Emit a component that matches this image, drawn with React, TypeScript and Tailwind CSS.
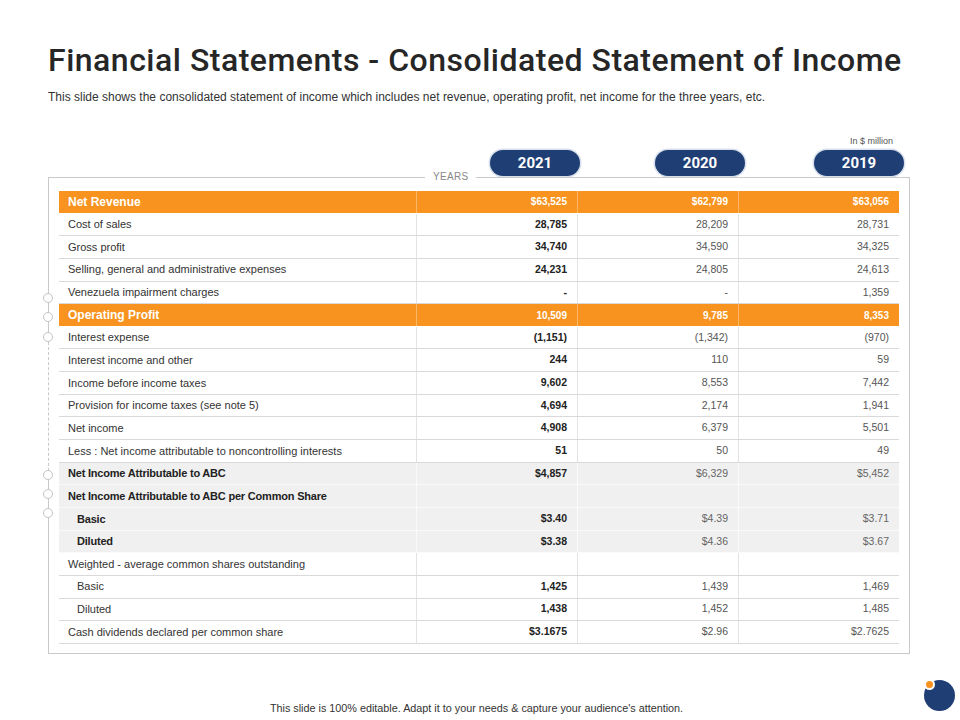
import React from 'react'

type Row = {
  label: string
  values: [string, string, string]
  kind?: 'orange' | 'gray'
  indent?: boolean
  boldLabel?: boolean
}

const rows: Row[] = [
  { label: 'Net Revenue', values: ['$63,525', '$62,799', '$63,056'], kind: 'orange' },
  { label: 'Cost of sales', values: ['28,785', '28,209', '28,731'] },
  { label: 'Gross profit', values: ['34,740', '34,590', '34,325'] },
  { label: 'Selling, general and administrative expenses', values: ['24,231', '24,805', '24,613'] },
  { label: 'Venezuela impairment charges', values: ['-', '-', '1,359'] },
  { label: 'Operating Profit', values: ['10,509', '9,785', '8,353'], kind: 'orange' },
  { label: 'Interest expense', values: ['(1,151)', '(1,342)', '(970)'] },
  { label: 'Interest income and other', values: ['244', '110', '59'] },
  { label: 'Income before income taxes', values: ['9,602', '8,553', '7,442'] },
  { label: 'Provision for income taxes (see note 5)', values: ['4,694', '2,174', '1,941'] },
  { label: 'Net income', values: ['4,908', '6,379', '5,501'] },
  { label: 'Less : Net income attributable to noncontrolling interests', values: ['51', '50', '49'] },
  { label: 'Net Income Attributable to ABC', values: ['$4,857', '$6,329', '$5,452'], kind: 'gray', boldLabel: true },
  { label: 'Net Income Attributable to ABC per Common Share', values: ['', '', ''], kind: 'gray', boldLabel: true },
  { label: 'Basic', values: ['$3.40', '$4.39', '$3.71'], kind: 'gray', boldLabel: true, indent: true },
  { label: 'Diluted', values: ['$3.38', '$4.36', '$3.67'], kind: 'gray', boldLabel: true, indent: true },
  { label: 'Weighted - average common shares outstanding', values: ['', '', ''] },
  { label: 'Basic', values: ['1,425', '1,439', '1,469'], indent: true },
  { label: 'Diluted', values: ['1,438', '1,452', '1,485'], indent: true },
  { label: 'Cash dividends declared per common share', values: ['$3.1675', '$2.96', '$2.7625'] },
]

const years = [
  { year: '2021', ml: 'ml-[442px]' },
  { year: '2020', ml: 'ml-[75px]' },
  { year: '2019', ml: 'ml-[69px]' },
]

function TableRow({ row }: { row: Row }) {
  const orange = row.kind === 'orange'
  const gray = row.kind === 'gray'
  const rowCls = orange
    ? 'bg-[#f7931e] border-b border-white'
    : gray
      ? 'bg-[#f0f0f0] border-b border-[#fafafa]'
      : 'bg-white border-b border-[#d9d9d9]'
  const sep = orange ? 'border-l border-[#fbb867]' : gray ? 'border-l border-[#fafafa]' : 'border-l border-[#e3e3e3]'

  let labelCls = 'text-[11px] text-[#333]'
  if (orange) labelCls = 'text-[12px] font-bold text-white'
  else if (row.boldLabel) labelCls = 'text-[11px] font-bold text-[#222] tracking-[-0.2px]'

  return (
    <div className={`grid grid-cols-[357px_161px_161px_161px] h-[22.65px] ${rowCls}`}>
      <div className={`flex items-center ${row.indent ? 'pl-[18px]' : 'pl-[9px]'} ${labelCls}`}>{row.label}</div>
      {row.values.map((v, i) => {
        let cls = 'text-[10.5px] text-[#555]'
        if (orange) cls = 'text-[10px] font-bold text-white'
        else if (i === 0) cls = 'text-[10.5px] font-bold text-[#222]'
        else if (gray) cls = 'text-[10.5px] text-[#666]'
        return (
          <div key={i} className={`flex items-center justify-end pr-[10px] ${sep} ${cls}`}>
            {v}
          </div>
        )
      })}
    </div>
  )
}

function Dot({ top }: { top: string }) {
  return (
    <div className={`absolute left-[-6px] ${top} w-[10px] h-[10px] rounded-full bg-white border border-[#c4c4c4]`} />
  )
}

export default function App() {
  return (
    <div className="w-[960px] h-[720px] bg-white flex flex-col pl-[48px] pr-[50px] font-['Liberation_Sans',Arial,sans-serif]">
      <h1 className="mt-[41px] h-[38px] leading-[38px] text-[32px] font-medium text-[#262626] tracking-[0.5px] font-['Roboto',sans-serif] whitespace-nowrap">
        Financial Statements - Consolidated Statement of Income
      </h1>
      <p className="mt-[10px] h-[16px] leading-[16px] text-[12px] text-[#333] whitespace-nowrap">
        This slide shows the consolidated statement of income which includes net revenue, operating profit, net income for the three years, etc.
      </p>

      <div className="h-[72px] flex flex-col justify-end">
        <div className="h-[10px] leading-[10px] text-[9px] text-[#555] text-right pr-[17px] mb-[4px]">In $ million</div>
        <div className="flex h-[26px] mb-[1px]">
          {years.map((y) => (
            <div
              key={y.year}
              className={`${y.ml} w-[90px] h-[26px] rounded-full bg-[#1f3e74] shadow-[0_0_0_1.5px_#d8e0ec] flex items-center justify-center text-white text-[15px] font-bold font-['Roboto',sans-serif]`}
            >
              {y.year}
            </div>
          ))}
        </div>
      </div>

      <div className="relative border border-[#c9c9c9] pt-[13px] pl-[10px] pr-[10px] pb-[9px]">
        <div className="absolute top-[-7px] left-[376px] px-[8px] bg-white text-[10px] leading-[12px] text-[#888] tracking-[0.3px]">
          YEARS
        </div>
        <div className="absolute left-[-1px] top-[164px] h-[134px] w-[1px] bg-white border-l border-dashed border-[#c9c9c9]" />
        <Dot top="top-[115px]" />
        <Dot top="top-[134px]" />
        <Dot top="top-[154px]" />
        <Dot top="top-[292px]" />
        <Dot top="top-[311px]" />
        <Dot top="top-[330px]" />
        {rows.map((r, i) => (
          <TableRow key={i} row={r} />
        ))}
      </div>

      <div className="flex items-end h-[66px]">
        <div className="flex-1" />
        <div className="text-[10.8px] text-[#333] leading-[12px] mb-[6px] mr-[50px] whitespace-nowrap">
          This slide is 100% editable. Adapt it to your needs &amp; capture your audience's attention.
        </div>
        <div className="flex-1 flex justify-end mr-[-45px] mb-[9px]">
          <div className="relative w-[31px] h-[31px] rounded-full bg-[#1f3e74]">
            <div className="absolute left-[0px] top-[-1px] w-[11px] h-[11px] rounded-full bg-[#f7931e] border-2 border-white" />
          </div>
        </div>
      </div>
    </div>
  )
}
